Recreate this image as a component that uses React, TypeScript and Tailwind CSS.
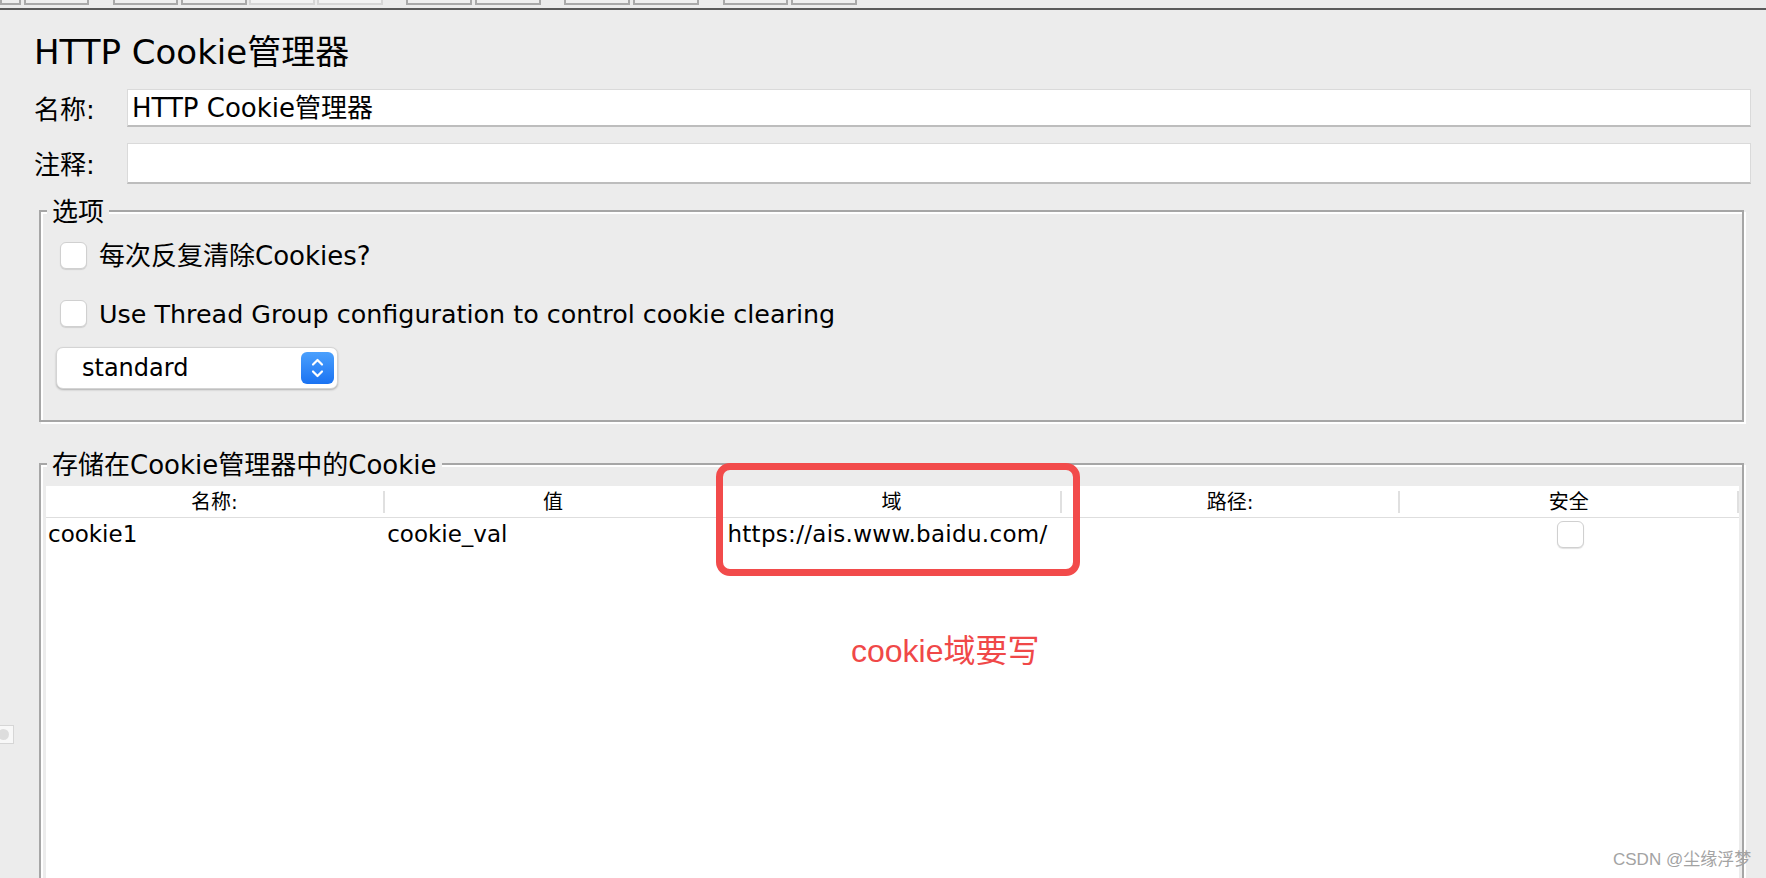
import React from 'react';

const segs = [
  { w: 21, ml: 0, light: false },
  { w: 65, ml: 3, light: false },
  { w: 65, ml: 24, light: false },
  { w: 66, ml: 3, light: false },
  { w: 66, ml: 2, light: true },
  { w: 66, ml: 2, light: true },
  { w: 66, ml: 23, light: false },
  { w: 66, ml: 3, light: false },
  { w: 66, ml: 23, light: false },
  { w: 66, ml: 3, light: false },
  { w: 65, ml: 24, light: false },
  { w: 66, ml: 3, light: false },
];

const headers = ['名称:', '值', '域', '路径:', '安全'];

const Checkbox: React.FC = () => (
  <div className="w-[27px] h-[27px] shrink-0 rounded-[6px] bg-white border border-[#d0d0d0] shadow-[0_1px_1px_rgba(0,0,0,0.12)]" />
);

const Legend: React.FC<{ children: React.ReactNode }> = ({ children }) => (
  <span className="absolute left-[6px] -top-[14px] px-[5px] bg-[#ececec] text-[26px] leading-[28px]">
    {children}
  </span>
);

const App: React.FC = () => {
  return (
    <div className="relative w-full h-[878px] overflow-hidden bg-[#ececec] text-black font-['DejaVu_Sans','Noto_Sans_CJK_SC',sans-serif]">
      {/* toolbar buttons cut off at the top */}
      <div className="flex h-[5px]">
        {segs.map((s, i) => (
          <div
            key={i}
            style={{ width: s.w, marginLeft: s.ml }}
            className={
              s.light
                ? 'h-full border-x-2 border-b-2 border-[#d6d6d6] bg-[#f2f2f2]'
                : 'h-full border-x-2 border-b-2 border-[#a9a9a9] bg-[#efefef]'
            }
          />
        ))}
      </div>
      <div className="mt-[3px] h-[2px] bg-[#5a5a5a]" />

      <div className="pl-[34px] pr-[15px]">
        <h1 className="mt-[22px] text-[34px] leading-[40px] font-normal">HTTP Cookie管理器</h1>

        <div className="mt-[17px] flex items-center h-[38px]">
          <span className="w-[93px] text-[26px] leading-[30px] pt-[3px]">名称:</span>
          <div className="flex-1 h-full flex items-center pl-[4px] pt-[2px] bg-white border border-[#dadada] border-b-2 border-b-[#bdbdbd] text-[26px]">
            HTTP Cookie管理器
          </div>
        </div>

        <div className="mt-[16px] flex items-center h-[41px]">
          <span className="w-[93px] text-[26px] leading-[30px] pt-[2px]">注释:</span>
          <div className="flex-1 h-full bg-white border border-[#dadada] border-b-2 border-b-[#bdbdbd]" />
        </div>
      </div>

      {/* 选项 */}
      <div className="relative ml-[39px] mr-[22px] mt-[26px] border-2 border-[#a6a6a6] shadow-[inset_2px_2px_0_#fff,2px_2px_0_#fff] pt-[30px] pb-[31px] pl-[15px]">
        <Legend>选项</Legend>
        <div className="flex items-center gap-[12px] pl-[4px] h-[27px]">
          <Checkbox />
          <span className="text-[26px] leading-[30px]">每次反复清除Cookies?</span>
        </div>
        <div className="mt-[30px] flex items-center gap-[12px] pl-[4px] h-[28px]">
          <Checkbox />
          <span className="text-[25.4px] leading-[30px] pt-[2px]">Use Thread Group configuration to control cookie clearing</span>
        </div>
        <div className="mt-[20px] w-[282px] h-[42px] flex items-center justify-between pl-[25px] pr-[3px] bg-white rounded-[7px] border border-[#d4d4d4] shadow-[0_1px_2px_rgba(0,0,0,0.25)]">
          <span className="text-[24px] leading-[30px]">standard</span>
          <div className="w-[33px] h-[32px] rounded-[6px] bg-gradient-to-b from-[#4aa0fd] to-[#1a72f2] flex items-center justify-center">
            <svg width="33" height="32" viewBox="0 0 33 32" fill="none" stroke="#fff" strokeWidth="2.2" strokeLinecap="round" strokeLinejoin="round">
              <path d="M12 12.5 L16.5 8 L21 12.5" />
              <path d="M12 19.5 L16.5 24 L21 19.5" />
            </svg>
          </div>
        </div>
      </div>

      {/* 存储在Cookie管理器中的Cookie */}
      <div className="relative ml-[39px] mr-[22px] mt-[41px] h-[440px] flex flex-col border-2 border-[#a6a6a6] shadow-[inset_2px_2px_0_#fff,2px_2px_0_#fff] pt-[21px] pl-[5px] pr-[3px]">
        <Legend>存储在Cookie管理器中的Cookie</Legend>
        <div className="flex-1 flex flex-col bg-white">
          <div className="flex h-[32px] border-b border-[#dedede]">
            {headers.map((h) => (
              <div key={h} className="flex-1 flex items-center">
                <span className="flex-1 text-center text-[20px] leading-[24px]">{h}</span>
                <div className="w-[2px] h-[22px] bg-[#e0e0e0]" />
              </div>
            ))}
          </div>
          <div className="flex h-[32px] items-center text-[23px] leading-[28px]">
            <div className="flex-1 pl-[2px]">cookie1</div>
            <div className="flex-1 pl-[2px]">cookie_val</div>
            <div className="flex-1 pl-[3px] tracking-[0.3px]">https://ais.www.baidu.com/</div>
            <div className="flex-1" />
            <div className="flex-1 flex justify-center">
              <Checkbox />
            </div>
          </div>
        </div>
      </div>

      {/* annotation */}
      <div className="absolute left-[716px] top-[463px] w-[364px] h-[113px] rounded-[14px] border-[7px] border-[#f24b4b]" />
      <div className="absolute left-[851px] top-[633px] text-[32px] leading-[36px] text-[#f04848] font-['Liberation_Sans','Noto_Sans_CJK_SC',sans-serif]">
        cookie域要写
      </div>

      {/* splitter handle */}
      <div className="absolute left-0 top-[725px] w-[14px] h-[19px] flex items-center bg-[#f8f8f8] border border-l-0 border-[#d6d6d6]">
        <div className="w-[11px] h-[11px] -ml-[2px] rounded-full bg-[#dddddd]" />
      </div>

      {/* watermark */}
      <div className="absolute left-[1613px] top-[849px] text-[17px] leading-[22px] text-[#a3a3a3] whitespace-nowrap font-['Liberation_Sans','Noto_Sans_CJK_SC',sans-serif]">
        CSDN @尘缘浮梦
      </div>
    </div>
  );
};

export default App;
